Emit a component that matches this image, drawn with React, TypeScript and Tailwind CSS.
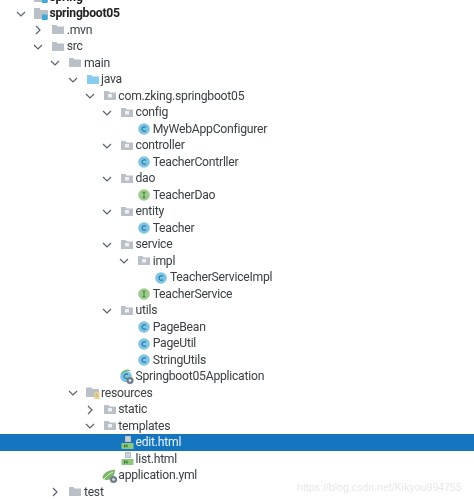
import React from "react";

type Kind = "module" | "folder" | "pkg" | "src" | "res" | "c" | "i" | "boot" | "html" | "yml";
type Row = { l: number; t: string; k: Kind; c?: "o" | "r"; bold?: boolean; sel?: boolean };

const rows: Row[] = [
  { l: 0, t: "spring", k: "module", bold: true },
  { l: 0, t: "springboot05", k: "module", c: "o", bold: true },
  { l: 1, t: ".mvn", k: "folder", c: "r" },
  { l: 1, t: "src", k: "folder", c: "o" },
  { l: 2, t: "main", k: "folder", c: "o" },
  { l: 3, t: "java", k: "src", c: "o" },
  { l: 4, t: "com.zking.springboot05", k: "pkg", c: "o" },
  { l: 5, t: "config", k: "pkg", c: "o" },
  { l: 6, t: "MyWebAppConfigurer", k: "c" },
  { l: 5, t: "controller", k: "pkg", c: "o" },
  { l: 6, t: "TeacherContrller", k: "c" },
  { l: 5, t: "dao", k: "pkg", c: "o" },
  { l: 6, t: "TeacherDao", k: "i" },
  { l: 5, t: "entity", k: "pkg", c: "o" },
  { l: 6, t: "Teacher", k: "c" },
  { l: 5, t: "service", k: "pkg", c: "o" },
  { l: 6, t: "impl", k: "pkg", c: "o" },
  { l: 7, t: "TeacherServiceImpl", k: "c" },
  { l: 6, t: "TeacherService", k: "i" },
  { l: 5, t: "utils", k: "pkg", c: "o" },
  { l: 6, t: "PageBean", k: "c" },
  { l: 6, t: "PageUtil", k: "c" },
  { l: 6, t: "StringUtils", k: "c" },
  { l: 5, t: "Springboot05Application", k: "boot" },
  { l: 3, t: "resources", k: "res", c: "o" },
  { l: 4, t: "static", k: "pkg", c: "r" },
  { l: 4, t: "templates", k: "pkg", c: "o" },
  { l: 5, t: "edit.html", k: "html", sel: true },
  { l: 5, t: "list.html", k: "html" },
  { l: 4, t: "application.yml", k: "yml" },
  { l: 2, t: "test", k: "folder", c: "r" },
];

const Folder = ({ color = "#b9c0c7" }: { color?: string }) => (
  <path d="M2 3h4.5l1 1.5H14v7.5H2z" fill={color} />
);

function Icon({ k }: { k: Kind }) {
  switch (k) {
    case "module":
      return (
        <svg width="16" height="16" viewBox="0 0 16 16">
          <path d="M1 2h5.5l1 2H15v9H1z" fill="#b9c0c7" />
          <rect x="9" y="8.5" width="5.5" height="5.5" fill="#3fa9d6" />
        </svg>
      );
    case "folder":
      return (
        <svg width="16" height="16" viewBox="0 0 16 16">
          <Folder />
        </svg>
      );
    case "src":
      return (
        <svg width="16" height="16" viewBox="0 0 16 16">
          <Folder color="#89cdee" />
        </svg>
      );
    case "pkg":
      return (
        <svg width="16" height="16" viewBox="0 0 16 16">
          <Folder />
          <rect x="6" y="6" width="4" height="3.5" fill="#eef0f2" />
        </svg>
      );
    case "res":
      return (
        <svg width="16" height="16" viewBox="0 0 16 16">
          <path d="M1 2.5h5.5l1 1.5H14v8H1z" fill="#b9c0c7" />
          <rect x="9.5" y="7" width="5" height="7" fill="#ecd394" />
          <path d="M10.5 9h3M10.5 11h3" stroke="#c9a75e" strokeWidth="0.8" />
        </svg>
      );
    case "c":
    case "i":
      return (
        <svg width="16" height="16" viewBox="0 0 16 16">
          <circle cx="8" cy="8" r="5.8" fill={k === "c" ? "#7cc5e6" : "#9dcb8e"} />
          {k === "c" ? (
            <path d="M10 6.4A2.3 2.3 0 1 0 10 9.6" fill="none" stroke="#2b6f8e" strokeWidth="1.1" />
          ) : (
            <path d="M6.6 5.3h2.8M8 5.3v5.4M6.6 10.7h2.8" fill="none" stroke="#3f7a3a" strokeWidth="1" />
          )}
        </svg>
      );
    case "boot":
      return (
        <svg width="16" height="16" viewBox="0 0 16 16">
          <circle cx="7" cy="7.5" r="5.8" fill="#7cc5e6" />
          <path d="M9 5.6A2.3 2.3 0 1 0 9 8.8" fill="none" stroke="#2b6f8e" strokeWidth="1.1" />
          <path d="M2 5Q6 0 11 1.5" fill="none" stroke="#6fb65f" strokeWidth="1.2" />
          <circle cx="11" cy="11.5" r="3.6" fill="#6f7f8c" />
          <circle cx="11" cy="11.5" r="1.3" fill="#e4e8ea" />
        </svg>
      );
    case "html":
      return (
        <svg width="16" height="16" viewBox="0 0 16 16">
          <path d="M6 1h6v6H6z" fill="#b8bfc6" />
          <path d="M7 3h4M7 5h4" stroke="#eef0f2" strokeWidth="0.8" />
          <rect x="2.5" y="8" width="12" height="6" fill="#8fc67d" />
          <path d="M5.5 9.5v3M8 9.5v3M5.5 11H8" stroke="#2f6a2a" strokeWidth="0.9" fill="none" />
        </svg>
      );
    case "yml":
      return (
        <svg width="16" height="16" viewBox="0 0 16 16">
          <path d="M0.5 10C0.5 5 6 2.5 13 1.5 13 7 10 12 5 12 3.5 12 2 11.5 0.5 10Z" fill="#7db86a" />
          <path d="M2 11Q6 6 11 4" stroke="#eaf3e5" strokeWidth="0.8" fill="none" />
          <circle cx="11.5" cy="11.5" r="3.6" fill="#6f7f8c" />
          <circle cx="11.5" cy="11.5" r="1.3" fill="#e4e8ea" />
        </svg>
      );
  }
}

function Chevron({ dir }: { dir: "o" | "r" }) {
  return (
    <svg width="10" height="10" viewBox="0 0 10 10" fill="none" stroke="#5a646e" strokeWidth="1.2">
      {dir === "o" ? <path d="M1 3l4 4 4-4" /> : <path d="M3 1l4 4-4 4" />}
    </svg>
  );
}

export default function App() {
  return (
    <div className="relative h-[499px] w-[474px] overflow-hidden bg-white font-['Roboto',sans-serif]">
      <div className="mt-[-11.25px] flex flex-col blur-[0.35px]">
        {rows.map((r, i) => (
          <div
            key={i}
            className={`flex h-[16.5px] items-center ${r.sel ? "bg-[#1675bf] text-[#e8f2fa]" : "text-[#3a4045]"}`}
            style={{ paddingLeft: 16 + r.l * 17.2 }}
          >
            <span className="flex w-[17px] shrink-0 items-center">
              {r.c ? <Chevron dir={r.c} /> : null}
            </span>
            <span className="flex w-[16.5px] shrink-0 items-center">
              <Icon k={r.k} />
            </span>
            <span className={`whitespace-nowrap text-[12.2px] leading-none tracking-[-0.25px] ${r.bold ? "font-bold text-[#222]" : ""}`}>
              {r.t}
            </span>
          </div>
        ))}
      </div>
      <div className="absolute left-[297px] top-[480px] whitespace-nowrap font-['Liberation_Sans',sans-serif] text-[10.6px] text-[#e6e7e9] blur-[0.5px]">
        https://blog.csdn.net/Kikyou994755
      </div>
    </div>
  );
}
